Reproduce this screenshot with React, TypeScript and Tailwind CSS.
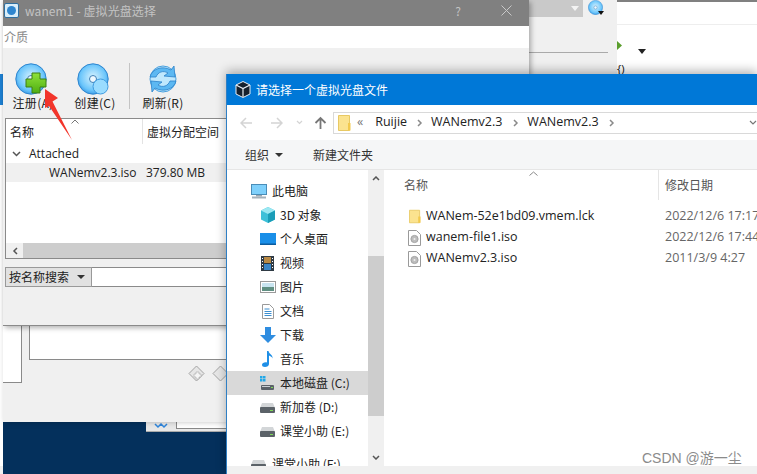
import React from "react";

const cjk = { fontFamily: '"Noto Sans CJK SC", "Liberation Sans", sans-serif' };
const ui = { fontFamily: '"Open Sans", "Noto Sans CJK SC", sans-serif' };

function Disc({ size = 32, hole = true }: { size?: number; hole?: boolean }) {
  return (
    <svg width={size} height={size} viewBox="0 0 32 32">
      <defs>
        <radialGradient id="dg" cx="50%" cy="45%" r="60%">
          <stop offset="0%" stopColor="#d8f3ff" />
          <stop offset="70%" stopColor="#6cc6fb" />
          <stop offset="100%" stopColor="#2d8fe0" />
        </radialGradient>
      </defs>
      <circle cx="16" cy="16" r="15.2" fill="url(#dg)" stroke="#2f86cf" strokeWidth="1" />
      {hole && <circle cx="16" cy="16" r="3.5" fill="#eef8ff" stroke="#3f7fb5" />}
    </svg>
  );
}

function RegisterIcon() {
  return (
    <div className="relative h-[32px] w-[36px]">
      <Disc />
      <svg className="absolute left-[10px] top-[9px]" width="22" height="22" viewBox="0 0 22 22">
        <defs>
          <linearGradient id="pg" x1="0" y1="0" x2="0" y2="1">
            <stop offset="0%" stopColor="#8fe23a" />
            <stop offset="100%" stopColor="#4fae12" />
          </linearGradient>
        </defs>
        <path d="M7 1h8v6h6v8h-6v6H7v-6H1V7h6z" fill="url(#pg)" stroke="#3c7f12" strokeWidth="1" />
      </svg>
    </div>
  );
}

function CreateIcon() {
  return (
    <div className="relative h-[32px] w-[36px]">
      <Disc />
      <svg className="absolute left-[15px] top-[15px]" width="17" height="17" viewBox="0 0 17 17">
        <circle cx="8.5" cy="8.5" r="7.5" fill="#9adcff" stroke="#3f9be0" />
      </svg>
    </div>
  );
}

function RefreshIcon() {
  return (
    <svg width="32" height="32" viewBox="0 0 32 32">
      <circle cx="16" cy="16" r="13" fill="#bfe8fd" stroke="#4aa0de" />
      <path d="M3 14C5 6 15 2 24 7l3-4 1 11-11-1 4-3c-5-3-10-1-12 4z" fill="#5cb8f2" stroke="#2c82c9" strokeWidth="0.8" />
      <path d="M29 18c-2 8-12 12-21 7l-3 4-1-11 11 1-4 3c5 3 10 1 12-4z" fill="#5cb8f2" stroke="#2c82c9" strokeWidth="0.8" />
    </svg>
  );
}

function FolderIcon({ w = 13, h = 18 }: { w?: number; h?: number }) {
  return (
    <svg width={w} height={h} viewBox="0 0 13 18" preserveAspectRatio="none">
      <path d="M0.5 1.5h11v15h-11z" fill="#fbe38f" stroke="#e8c964" />
      <path d="M10 9h2.5v7.5H10z" fill="#f2c94c" />
    </svg>
  );
}

function IsoIcon() {
  return (
    <svg width="13" height="16" viewBox="0 0 13 16">
      <path d="M0.5 0.5h8l4 4v11h-12z" fill="#fff" stroke="#9a9a9a" />
      <circle cx="6.5" cy="9" r="3.6" fill="#bdbdbd" stroke="#a3a3a3" />
      <circle cx="6.5" cy="9" r="1" fill="#eee" />
    </svg>
  );
}

function NavIcon({ kind }: { kind: string }) {
  switch (kind) {
    case "pc":
      return (
        <svg width="16" height="15" viewBox="0 0 16 15">
          <rect x="0.5" y="0.5" width="15" height="10" fill="#7fd0fb" stroke="#4a8db8" />
          <rect x="5" y="11" width="6" height="1.5" fill="#9aa7b0" />
          <rect x="1" y="12.5" width="14" height="2" fill="#a6b2bb" />
        </svg>
      );
    case "3d":
      return (
        <svg width="16" height="16" viewBox="0 0 16 16">
          <path d="M8 0l7 3.5v9L8 16 1 12.5v-9z" fill="#3cc0d8" />
          <path d="M8 7L1 3.5 8 0l7 3.5z" fill="#9be8f2" />
          <path d="M8 7v9l7-3.5v-9z" fill="#1a9db8" />
        </svg>
      );
    case "desk":
      return (
        <svg width="16" height="12" viewBox="0 0 16 12">
          <rect width="16" height="12" fill="#1a8fe8" />
          <rect x="0" y="10.5" width="16" height="1.5" fill="#0c5c9e" />
        </svg>
      );
    case "video":
      return (
        <svg width="13" height="15" viewBox="0 0 13 15">
          <rect width="13" height="15" fill="#2f3a44" />
          <rect x="3" y="1" width="7" height="6" fill="#b98a45" />
          <rect x="3" y="8" width="7" height="6" fill="#3a86c8" />
          <path d="M1 2h1v1H1zM1 5h1v1H1zM1 8h1v1H1zM1 11h1v1H1zM11 2h1v1h-1zM11 5h1v1h-1zM11 8h1v1h-1zM11 11h1v1h-1z" fill="#fff" />
        </svg>
      );
    case "pic":
      return (
        <svg width="16" height="12" viewBox="0 0 16 12">
          <rect x="0.5" y="0.5" width="15" height="11" fill="#fff" stroke="#9a9a9a" />
          <rect x="2" y="2" width="12" height="4" fill="#c8e4f0" />
          <rect x="2" y="6" width="12" height="4" fill="#5f8f82" />
        </svg>
      );
    case "doc":
      return (
        <svg width="12" height="15" viewBox="0 0 12 15">
          <path d="M0.5 0.5h7l4 4v10h-11z" fill="#fff" stroke="#9a9a9a" />
          <path d="M2.5 5h5M2.5 7.5h7M2.5 9.5h7M2.5 11.5h7" stroke="#3d8fd0" strokeWidth="1" />
        </svg>
      );
    case "down":
      return (
        <svg width="16" height="16" viewBox="0 0 16 16">
          <path d="M5 0h6v8h5l-8 8-8-8h5z" fill="#2f8de0" />
        </svg>
      );
    case "music":
      return (
        <svg width="12" height="16" viewBox="0 0 12 16">
          <path d="M5 0h1.5c.5 3 4.5 3.5 4 7.5C10 5.5 8 5 7 4.5V13c0 2-2 3-4 3s-3-1-3-2.3C0 12 2.5 11 5 11.500z" fill="#1f8fe6" />
        </svg>
      );
    case "c":
      return (
        <svg width="15" height="14" viewBox="0 0 15 14">
          <path d="M0 0h2.5v2.5H0zM3 0h2.5v2.5H3zM0 3h2.5v2.5H0zM3 3h2.5v2.5H3z" fill="#22a8e8" />
          <rect x="1" y="9" width="13" height="5" rx="1" fill="#5b6268" />
          <rect x="2" y="10" width="8" height="1" fill="#c9cfd3" />
          <rect x="11" y="11" width="2" height="1" fill="#7ed957" />
        </svg>
      );
    default:
      return (
        <svg width="15" height="11" viewBox="0 0 15 11">
          <path d="M2 1h11l2 5H0z" fill="#d3d6d8" />
          <rect x="0" y="5" width="15" height="6" rx="1" fill="#5b6268" />
          <rect x="10" y="8" width="3" height="1" fill="#7ed957" />
        </svg>
      );
  }
}

const navItems = [
  { t: "3D 对象", k: "3d" },
  { t: "个人桌面", k: "desk" },
  { t: "视频", k: "video" },
  { t: "图片", k: "pic" },
  { t: "文档", k: "doc" },
  { t: "下载", k: "down" },
  { t: "音乐", k: "music" },
  { t: "本地磁盘 (C:)", k: "c", sel: true },
  { t: "新加卷 (D:)", k: "d" },
  { t: "课堂小助 (E:)", k: "d" },
];

const files = [
  { n: "WANem-52e1bd09.vmem.lck", d: "2022/12/6 17:17", folder: true },
  { n: "wanem-file1.iso", d: "2022/12/6 17:44" },
  { n: "WANemv2.3.iso", d: "2011/3/9 4:27" },
];

function Chevron() {
  return (
    <svg width="6" height="8" viewBox="0 0 6 8" className="shrink-0">
      <path d="M1 1l3 3-3 3" fill="none" stroke="#8a8a8a" strokeWidth="1.5" />
    </svg>
  );
}

function ToolButton({ label, w, children }: { label: string; w: string; children: React.ReactNode }) {
  return (
    <div className={`flex flex-col items-center ${w}`}>
      <div className="flex h-[32px] items-start justify-center">{children}</div>
      <span className="text-[12px] leading-[16px] tracking-[0.3px] text-[#222] whitespace-nowrap">{label}</span>
    </div>
  );
}

function BackWindow() {
  return (
    <div className="absolute left-[3px] top-0 flex h-[422px] w-[614px] flex-col bg-[#f0f0f0] shadow-[2px_0_6px_rgba(0,0,0,0.25)]">
      <div className="relative h-[326px]" />
      <div className="flex gap-[7px] h-[57px] items-start">
        <div className="h-[57px] w-[19px] border-b border-r border-[#8a8a8a] bg-white" />
        <div className="h-[34px] w-[560px] border-b border-l border-[#8a8a8a] bg-white" />
      </div>
    </div>
  );
}

function BackWindowChrome() {
  return (
    <>
      <div className="absolute left-[529px] top-0 flex h-[17px] w-[54px] items-center justify-end bg-[#c9c9c9] pr-[3px]">
        <svg width="10" height="6" viewBox="0 0 10 6"><path d="M1 0h8L5 5z" fill="#f3f3f3" /></svg>
      </div>
      <div className="absolute left-[588px] top-0">
        <Disc size={15} />
        <svg className="absolute left-[10px] top-[11px]" width="6" height="4" viewBox="0 0 6 4"><path d="M0 0h6L3 4z" fill="#111" /></svg>
      </div>
      <div className="absolute left-[529px] top-[52px] h-px w-[79px] bg-[#aaaaaa]" />
    </>
  );
}

function RightBehind() {
  return (
    <div className="absolute left-[617px] top-0 h-[74px] w-[140px] bg-white">
      <div className="h-[2px] bg-[#808080]" />
      <div className="mt-[22px] h-px bg-[#eeeeee]" />
      <svg className="absolute left-0 top-[41px]" width="5" height="9" viewBox="0 0 5 9"><path d="M0 0l5 4.5L0 9z" fill="#5a9e2c" /></svg>
      <svg className="absolute left-[21px] top-[49px]" width="8" height="5" viewBox="0 0 8 5"><path d="M0 0h8L4 5z" fill="#222" /></svg>
      <span className="absolute left-0 top-[62px] text-[11px] leading-[14px] text-[#222]">{"{)"}</span>
    </div>
  );
}

function Dialog() {
  return (
    <div style={cjk} className="absolute left-[3px] top-0 flex h-[326px] w-[526px] flex-col border-b border-[#8a8a8a] bg-[#f0f0f0] shadow-[2px_2px_5px_rgba(0,0,0,0.3)]">
      <div className="flex h-[26px] shrink-0 items-center bg-[#808080] pb-[5px] pl-[1px] text-[#c3c3c3]">
        <div className="flex h-[15px] w-[15px] items-center justify-center rounded-[2px] border border-[#2f6f9f] bg-[#d9eefa]">
          <div className="h-[9px] w-[9px] rounded-full bg-[#2f86cf]" />
        </div>
        <span className="ml-[6px] text-[12px] tracking-[0.1px]">wanem1 - 虚拟光盘选择</span>
        <span className="ml-auto mr-[40px] text-[12px]">?</span>
        <svg className="mr-[17px]" width="11" height="11" viewBox="0 0 11 11"><path d="M0.5 0.5l10 10M10.5 0.5l-10 10" stroke="#c8c8c8" /></svg>
      </div>
      <div className="flex h-[22px] shrink-0 items-center bg-white pl-[1px] text-[12px] text-[#8a8a8a]">介质</div>
      <div className="flex h-[70px] shrink-0 items-start pt-[15px]">
        <ToolButton label="注册(A)" w="w-[60px]"><RegisterIcon /></ToolButton>
        <ToolButton label="创建(C)" w="w-[64px]"><CreateIcon /></ToolButton>
        <div className="ml-[2px] h-[46px] w-px bg-[#c4c4c4]" />
        <ToolButton label="刷新(R)" w="w-[66px]"><RefreshIcon /></ToolButton>
      </div>
      <div className="mx-[2px] flex h-[141px] shrink-0 flex-col border border-[#8a8a8a] bg-white text-[12px] text-[#222]">
        <div className="relative flex h-[25px] shrink-0 items-center">
          <span className="w-[136px] pl-[4px]">名称</span>
          <div className="h-full w-px bg-[#e3e3e3]" />
          <span className="pl-[4px]">虚拟分配空间</span>
          <svg className="absolute left-[65px] top-0" width="8" height="5" viewBox="0 0 8 5"><path d="M0.5 4.5L4 1l3.5 3.5" fill="none" stroke="#777" /></svg>
        </div>
        <div style={ui} className="flex h-[19px] shrink-0 items-center">
          <svg className="ml-[6px] mr-[8px]" width="9" height="6" viewBox="0 0 9 6"><path d="M1 1l3.5 3.5L8 1" fill="none" stroke="#555" strokeWidth="1.5" /></svg>
          <span className="text-[12px]">Attached</span>
        </div>
        <div style={ui} className="flex h-[19px] shrink-0 items-center bg-[#f0f0f0] text-[12px]">
          <span className="w-[140px] pl-[43px]">WANemv2.3.iso</span>
          <span>379.80 MB</span>
        </div>
        <div className="flex-1" />
        <div className="flex h-[15px] shrink-0 bg-[#cdcdcd]">
          <div className="flex w-[17px] items-center justify-center bg-[#f0f0f0]">
            <svg width="6" height="8" viewBox="0 0 6 8"><path d="M5 1L2 4l3 3" fill="none" stroke="#555" strokeWidth="1.5" /></svg>
          </div>
        </div>
      </div>
      <div className="ml-[2px] mt-[8px] flex h-[20px] shrink-0 text-[12px] text-[#222]">
        <div className="flex w-[87px] items-center gap-[8px] border border-[#999] bg-[#e1e1e1] pl-[3px]">
          <span>按名称搜索</span>
          <svg width="8" height="4" viewBox="0 0 8 4"><path d="M0 0h8L4 4z" fill="#333" /></svg>
        </div>
        <div className="flex-1 border border-l-0 border-[#8a8a8a] bg-white" />
      </div>
    </div>
  );
}

function FileDialog() {
  return (
    <div style={cjk} className="absolute left-[226px] top-[74px] flex h-[400px] w-[531px] flex-col border-l border-[#2f7fc4] bg-white shadow-[0_-3px_10px_rgba(0,0,0,0.3)]">
      <div className="flex h-[31px] shrink-0 items-center bg-[#0078d7] pl-[8px] text-[12px] text-white">
        <svg width="16" height="17" viewBox="0 0 16 17">
          <path d="M8 0.5l7 3.5v9l-7 3.5L1 13V4z" fill="#16212e" stroke="#e8eef4" strokeWidth="1" />
          <path d="M1 4l7 3.5L15 4M8 7.5V16" fill="none" stroke="#e8eef4" strokeWidth="1.2" />
        </svg>
        <span className="ml-[5px]">请选择一个虚拟光盘文件</span>
      </div>
      <div className="flex h-[35px] shrink-0 items-center">
        <svg className="ml-[13px]" width="13" height="12" viewBox="0 0 13 12"><path d="M12 6H2M6 1L1 6l5 5" fill="none" stroke="#d4d4d4" strokeWidth="1.5" /></svg>
        <svg className="ml-[17px]" width="13" height="12" viewBox="0 0 13 12"><path d="M1 6h10M7 1l5 5-5 5" fill="none" stroke="#d4d4d4" strokeWidth="1.5" /></svg>
        <svg className="ml-[13px]" width="7" height="5" viewBox="0 0 7 5"><path d="M1 1l2.5 2.5L6 1" fill="none" stroke="#d4d4d4" strokeWidth="1.2" /></svg>
        <svg className="ml-[11px]" width="13" height="13" viewBox="0 0 13 13"><path d="M6.5 13V2M1.5 7l5-5 5 5" fill="none" stroke="#777" strokeWidth="1.8" /></svg>
        <div style={ui} className="ml-[6px] flex h-[22px] flex-1 items-center border border-r-0 border-[#d9d9d9] pl-[4px] text-[12.5px] text-[#222]">
          <FolderIcon />
          <span className="ml-[6px] text-[#777]">«</span>
          <span className="ml-[12px]">Ruijie</span>
          <span className="ml-[10px]"><Chevron /></span>
          <span className="ml-[8px]">WANemv2.3</span>
          <span className="ml-[11px]"><Chevron /></span>
          <span className="ml-[8px]">WANemv2.3</span>
          <span className="ml-[10px]"><Chevron /></span>
          <svg className="ml-auto" width="8" height="5" viewBox="0 0 8 5"><path d="M1 1l3 3 3-3" fill="none" stroke="#777" strokeWidth="1.2" /></svg>
        </div>
      </div>
      <div className="flex h-[30px] shrink-0 items-center border-b border-[#e6e6e6] bg-[#f5f6f7] pl-[18px] text-[12px] text-[#333]">
        <span>组织</span>
        <svg className="ml-[6px]" width="8" height="4" viewBox="0 0 8 4"><path d="M0 0h8L4 4z" fill="#333" /></svg>
        <span className="ml-[30px]">新建文件夹</span>
      </div>
      <div className="flex min-h-0 flex-1">
        <div className="flex w-[141px] shrink-0 flex-col overflow-hidden pt-[9px] text-[12px] text-[#222]">
          <div className="flex h-[24px] shrink-0 items-center pl-[24px]">
            <span className="flex w-[21px] justify-start"><NavIcon kind="pc" /></span>
            <span>此电脑</span>
          </div>
          {navItems.map((i) => (
            <div key={i.t} className={`flex h-[24px] shrink-0 items-center pl-[32px] ${i.sel ? "bg-[#d9d9d9]" : ""}`}>
              <span className="flex w-[21px] justify-center pr-[4px]"><NavIcon kind={i.k} /></span>
              <span>{i.t}</span>
            </div>
          ))}
          <div className="mt-[9px] flex h-[24px] shrink-0 items-center pl-[24px]">
            <span className="flex w-[21px] justify-start"><NavIcon kind="d" /></span>
            <span>课堂小助 (F:)</span>
          </div>
        </div>
        <div className="flex w-[16px] shrink-0 flex-col bg-[#f0f0f0]">
          <div className="flex h-[17px] items-center justify-center">
            <svg width="8" height="5" viewBox="0 0 8 5"><path d="M1 4l3-3 3 3" fill="none" stroke="#555" strokeWidth="1.5" /></svg>
          </div>
          <div className="mt-[69px] h-[160px] bg-[#cdcdcd]" />
          <div className="mt-auto flex h-[17px] items-center justify-center">
            <svg width="8" height="5" viewBox="0 0 8 5"><path d="M1 1l3 3 3-3" fill="none" stroke="#555" strokeWidth="1.5" /></svg>
          </div>
        </div>
        <div className="relative min-w-0 flex-1 overflow-hidden">
          <svg className="absolute left-[145px] top-[1px]" width="9" height="5" viewBox="0 0 9 5"><path d="M0.5 4.5L4.5 1l4 3.5" fill="none" stroke="#888" /></svg>
          <div className="flex h-[30px] items-center text-[12px] text-[#555]">
            <span className="w-[274px] shrink-0 pl-[20px]">名称</span>
            <div className="h-full w-px shrink-0 bg-[#e5e5e5]" />
            <span className="shrink-0 whitespace-nowrap pl-[6px]">修改日期</span>
          </div>
          <div className="mt-[6px] flex flex-col text-[12.5px]" style={ui}>
            {files.map((f) => (
              <div key={f.n} className="flex h-[21px] items-center whitespace-nowrap">
                <span className="flex w-[42px] shrink-0 justify-end pr-[5px]">
                  {f.folder ? <FolderIcon w={12} h={15} /> : <IsoIcon />}
                </span>
                <span className="w-[239px] shrink-0 text-[#222]">{f.n}</span>
                <span className="shrink-0 text-[#666]">{f.d}</span>
              </div>
            ))}
          </div>
        </div>
      </div>
      <div className="h-[8px] shrink-0 bg-[#f0f0f0]" />
    </div>
  );
}

export default function App() {
  return (
    <div className="relative h-[474px] w-[757px] overflow-hidden bg-white">
      <div className="absolute left-0 top-[74px] h-[31px] w-[3px] bg-[#1e83d6]" />
      <div className="absolute bottom-0 left-0 h-[8px] w-[3px] bg-[#f0f0f0]" />
      <div className="absolute left-[3px] top-[422px] h-[52px] w-[223px] bg-[#04305c]">
        <div className="absolute left-[143px] top-0 h-[10px] w-[80px] border-b border-[#aaa] bg-[#e8e8e8]">
          <svg className="absolute left-[8px] top-[1px]" width="14" height="6" viewBox="0 0 14 6"><path d="M1 1l3 3 3-3 3 3 3-3" fill="none" stroke="#2f86dd" strokeWidth="1.5" /></svg>
          <div className="absolute left-[30px] top-0 h-[7px] w-[50px] border-b border-l border-[#888] bg-white" />
        </div>
      </div>
      <BackWindow />
      <div className="absolute left-[188px] top-[365px]">
        <svg width="17" height="17" viewBox="0 0 17 17"><path d="M8.5 1L16 8.5 8.5 16 1 8.5z" fill="#e6e6e6" stroke="#a3a3a3" /><path d="M8 7h3v2h2v3h-2v2H8v-2H6V9h2z" fill="#f5f5f5" stroke="#aaa" strokeWidth="0.6" /></svg>
      </div>
      <div className="absolute left-[212px] top-[365px]">
        <svg width="17" height="17" viewBox="0 0 17 17"><path d="M8.5 1L16 8.5 8.5 16 1 8.5z" fill="#e6e6e6" stroke="#a3a3a3" /></svg>
      </div>
      <BackWindowChrome />
      <RightBehind />
      <Dialog />
      <FileDialog />
      <svg className="absolute left-[38px] top-[85px]" width="40" height="60" viewBox="0 0 40 60">
        <path d="M7 4L20 13 14.5 16.5 34 55 11 21 7 23z" fill="#f2352b" />
      </svg>
      <span className="absolute left-[642px] top-[449px] text-[14px] leading-[18px] text-[#8b8b8b]" style={{ fontFamily: '"Liberation Sans", "Noto Sans CJK SC", sans-serif' }}>
        CSDN @游一尘
      </span>
    </div>
  );
}
